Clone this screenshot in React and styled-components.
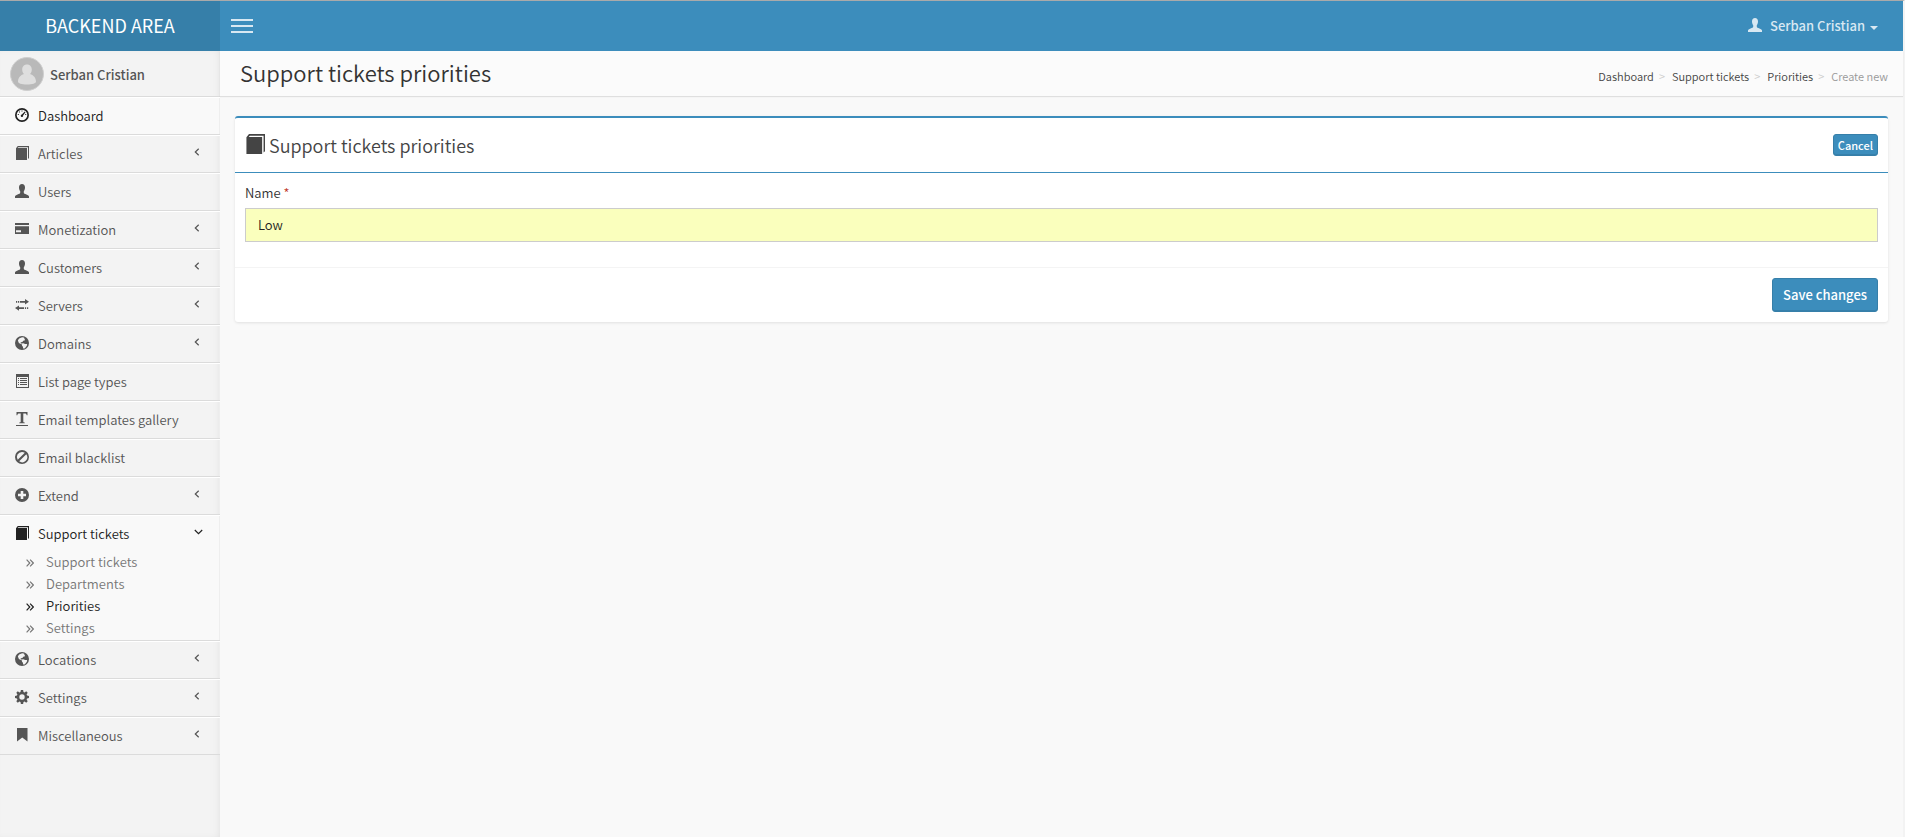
import React from 'react'
import styled, { createGlobalStyle, css } from 'styled-components'

const GlobalStyle = createGlobalStyle`
  * {
    box-sizing: border-box;
  }
  body {
    margin: 0;
    background: #f9f9f9;
    color: #333;
    font-family: 'Noto Sans CJK SC', 'Open Sans', sans-serif;
    font-size: 13px;
    font-weight: 350;
    line-height: 20px;
  }
  a {
    color: inherit;
    text-decoration: none;
  }
  ul, ol {
    list-style: none;
    margin: 0;
    padding: 0;
  }
  button, input {
    font-family: inherit;
  }
`

/* icons, all on a 14 unit grid */

const Svg = styled.svg`
  display: block;
  flex: none;
  width: ${p => p.$size || 14}px;
  height: ${p => p.$size || 14}px;
  fill: currentColor;
`

const shapes = {
  dashboard: <>
    <path fillRule='evenodd' d='M7 0a7 7 0 1 0 0 14A7 7 0 0 0 7 0zm0 1.7a5.3 5.3 0 1 1 0 10.6A5.3 5.3 0 0 1 7 1.7z' />
    <path d='M6.5 2.6h1v1h-1zM4 3.6h1v1H4zM2.8 6h1v1h-1zM10.2 6h1v1h-1zM9.8 3.6l.7.6-2.4 3.3a1.2 1.2 0 1 1-1.3-.9z' />
  </>,
  book: <path d='M1 2.2 2.8 0H14v12l-1 .9V1.2H3.4l-.8.9H12V14H1z' />,
  user: <path d='M7 0c1.9 0 3 1.4 3 3.6 0 1.5-.5 2.8-1.2 3.6v1.5c0 .7 1 1.1 2.6 1.7 1.6.6 2.6 1.1 2.6 2.1V14H0v-1.5c0-1 1-1.5 2.6-2.1 1.6-.6 2.6-1 2.6-1.7V7.200C4.500 6.400 4 5.100 4 3.600 4 1.400 5.100 0 7 0z' />,
  card: <path fillRule='evenodd' d='M0 1h14v2H0zM0 4.200h14V12H0zM1 8.200v2h5v-2z' />,
  transfer: <path d='M10 1l4 2.800-4 2.700V4.700H5V3h5zM3 3h1.200v1.700H3zM1 3h1.200v1.700H1zM4 7.500v1.800h5V11H4v1.800L0 10.100zM9.900 9.300h1.200V11H9.900zM12 9.300h1.200V11H12z' />,
  globe: <path fillRule='evenodd' d='M7 0a7 7 0 1 0 0 14A7 7 0 0 0 7 0zM6.400 1.500 8 1.300l1.600.7-.5 1 .9.200-.4 1.300-1.400.2-.8 1.300-1.500.3-.5.900 1.200.2 1.700-.2 1.900.8 1.700-.1.300 1-1.200 2.200-1.500 1.300-1.300.1-.3-1.700-1-1.200.2-1.200L5 7.700 3.600 6.500 2.900 4.300l1.300-1.700z' />,
  list: <path fillRule='evenodd' d='M1 0h13v14H1zM2 3v10h11V3zM3 4h1v1H3zM5 4h7v1H5zM3 6h1v1H3zM5 6h7v1H5zM3 8h1v1H3zM5 8h7v1H5zM3 10h1v1H3zM5 10h7v1H5z' />,
  textSize: <path d='M1.500 0h11v3.200h-.8C11.500 1.900 11 1.400 9.800 1.400H8.300v8c0 .8.300 1 1.500 1.100v.8H4.200v-.8c1.200-.1 1.500-.3 1.500-1.100v-8H4.200C3 1.400 2.500 1.900 2.300 3.200h-.8zM1 13h12v1H1z' />,
  ban: <path fillRule='evenodd' d='M7 0a7 7 0 1 0 0 14A7 7 0 0 0 7 0zm0 1.900c1 0 2 .3 2.800.8L2.700 9.800A5.100 5.100 0 0 1 7 1.900zm4.300 2.300A5.100 5.100 0 0 1 4.200 11.300z' />,
  plus: <path fillRule='evenodd' d='M7 0a7 7 0 1 0 0 14A7 7 0 0 0 7 0zM5.700 3h2.600v2.700H11v2.600H8.300V11H5.700V8.300H3V5.700h2.700z' />,
  cog: <path fillRule='evenodd' d='M5.900 0h2.200l.4 1.900 1.100.5L11.200 1.300l1.500 1.500-1.100 1.600.5 1.100 1.900.4v2.200l-1.900.4-.5 1.100 1.100 1.600-1.500 1.500-1.600-1.100-1.100.5L8.100 14H5.900l-.4-1.900-1.100-.5-1.600 1.100-1.500-1.500 1.100-1.600-.5-1.100L0 8.100V5.900l1.900-.4.5-1.100L1.300 2.800l1.500-1.500 1.600 1.100 1.100-.5zM7 4.300a2.700 2.700 0 1 0 0 5.400 2.700 2.700 0 0 0 0-5.400z' />,
  bookmark: <path d='M2 0h10.500v13.500L7.250 9.500 2 13.500z' />,
}

const Icon = ({ name, size }) =>
  <Svg viewBox='0 0 14 14' $size={size} aria-hidden='true'>{shapes[name]}</Svg>

const Line = styled.svg`
  display: block;
  flex: none;
  fill: none;
  stroke: currentColor;
  stroke-width: 1.2;
`

const AngleLeft = () =>
  <Line width='6' height='8' viewBox='0 0 6 8'><path d='M4.700.7 1.300 4l3.400 3.300' /></Line>

const AngleDown = () =>
  <Line width='9' height='6' viewBox='0 0 9 6'><path d='M.8 1 4.500 4.600 8.200 1' /></Line>

const DoubleAngle = () =>
  <Line width='8' height='8' viewBox='0 0 8 8'><path d='M.6.700 3.800 4 .6 7.300M4.100.700 7.300 4 4.100 7.300' /></Line>

/* layout */

const Page = styled.div`
  display: flex;
  flex-direction: column;
  min-height: 100vh;
  border-top: 1px solid #aaa;
  border-right: 2px solid #f3f3f3;
`

const Topbar = styled.header`
  display: flex;
  height: 50px;
  background: #3c8dbc;
  color: #fff;
`

const Logo = styled.a`
  flex: none;
  width: 220px;
  background: #367fa9;
  font-size: 18px;
  font-weight: 400;
  line-height: 48px;
  text-align: center;
`

const Navbar = styled.nav`
  flex: 1;
  display: flex;
  align-items: center;
  justify-content: space-between;
  padding: 0 25px 0 11px;
`

const Toggle = styled.button`
  display: flex;
  flex-direction: column;
  gap: 4px;
  width: 22px;
  padding: 0;
  border: 0;
  background: none;
  cursor: pointer;
  span {
    height: 2px;
    background: #d8e8f2;
  }
`

const Account = styled.button`
  display: flex;
  align-items: center;
  padding: 0;
  border: 0;
  background: none;
  color: #d8e8f2;
  font-size: 13px;
  font-weight: 500;
  line-height: 20px;
  cursor: pointer;
  svg {
    margin: 0 8px 2px 0;
  }
`

const Caret = styled.span`
  margin: 4px 0 0 5px;
  border: 4px solid transparent;
  border-top-color: currentColor;
  border-bottom: 0;
`

const Columns = styled.div`
  flex: 1;
  display: flex;
`

const Sidebar = styled.aside`
  flex: none;
  width: 220px;
  background: #f3f3f3;
  color: #555;
  box-shadow: inset -3px 0 8px -4px rgba(0, 0, 0, 0.1);
`

const UserPanel = styled.div`
  display: flex;
  align-items: center;
  height: 46px;
  padding: 0 10px;
  gap: 6px;
  border-bottom: 1px solid #dbdbdb;
  font-weight: 500;
  span {
    padding-top: 3px;
  }
`

const itemOn = css`
  background: #f9f9f9;
  color: #222;
`

const Item = styled.li`
  border-top: 1px solid #fff;
  border-bottom: 1px solid #dbdbdb;
  box-shadow: inset -1px 0 0 #eee;
  ${p => p.$on && itemOn}
`

const ItemLink = styled.a`
  display: flex;
  align-items: center;
  gap: 9px;
  height: 36px;
  padding: 0 16px 2px 15px;
  span {
    flex: 1;
    padding-top: 1px;
  }
`

const Angle = styled.i`
  display: flex;
  width: 10px;
  padding-bottom: 2px;
`

const SubLink = styled.a`
  display: flex;
  align-items: center;
  gap: 12px;
  height: 22px;
  padding-left: 26px;
  color: ${p => p.$on ? '#222' : '#777'};
  span {
    padding-bottom: 2px;
  }
`

const Main = styled.main`
  flex: 1;
  min-width: 0;
`

const Heading = styled.div`
  display: flex;
  align-items: center;
  justify-content: space-between;
  height: 45px;
  padding: 0 15px 4px 20px;
  background: #fbfbfb;
  box-shadow: 0 1px 1px rgba(0, 0, 0, 0.1);
  h1 {
    margin: 0;
    color: #333;
    font-size: 22px;
    font-weight: 350;
    line-height: 40px;
  }
`

const Crumbs = styled.ol`
  display: flex;
  padding-top: 8px;
  color: #999;
  font-size: 11px;
  li + li::before {
    content: '>';
    padding: 0 7px 0 5px;
    color: #ccc;
  }
  a {
    color: #444;
  }
`

const Box = styled.form`
  margin: 20px 15px;
  border-top: 2px solid #3c8dbc;
  border-radius: 3px;
  background: #fff;
  box-shadow: 0 1px 3px rgba(0, 0, 0, 0.1);
`

const BoxHeader = styled.div`
  display: flex;
  align-items: flex-start;
  justify-content: space-between;
  height: 55px;
  padding: 16px 10px 0;
  border-bottom: 1px solid #3c8dbc;
`

const BoxTitle = styled.h3`
  display: flex;
  gap: 4px;
  margin: 0;
  color: #444;
  font-size: 18px;
  font-weight: 350;
  line-height: 22px;
`

const BoxBody = styled.div`
  padding: 10px 10px 25px;
  label {
    display: block;
    margin-bottom: 5px;
  }
  em {
    color: #c0392b;
    font-style: normal;
  }
`

const TextInput = styled.input`
  display: block;
  width: 100%;
  height: 34px;
  padding: 5px 12px 7px;
  border: 1px solid #ccc;
  border-radius: 0;
  background: #faffbd;
  color: #222;
  font-size: 13px;
  font-weight: 350;
  outline: 0;
`

const BoxFooter = styled.div`
  display: flex;
  justify-content: flex-end;
  padding: 10px;
  border-top: 1px solid #f4f4f4;
`

const Button = styled.button`
  height: ${p => p.$small ? 22 : 34}px;
  padding: ${p => p.$small ? '0 4px' : '0 10px'};
  border: 1px solid #367fa9;
  border-radius: 3px;
  background: #3c8dbc;
  box-shadow: inset 0 -1px 0 rgba(0, 0, 0, 0.09);
  color: #fff;
  font-size: ${p => p.$small ? 11 : 13}px;
  font-weight: 500;
  line-height: 20px;
  cursor: pointer;
`

const Avatar = () =>
  <svg width='34' height='34' viewBox='0 0 34 34' aria-hidden='true'>
    <circle cx='17' cy='17' r='16.500' fill='#b9b9b9' stroke='#cfcfcf' />
    <path fill='#dedede' d='M17 7.500c3 0 4.800 2.200 4.800 5 0 2-.8 3.500-1.800 4.500 3.500 1 6 4 6 7.500 0 2-3.500 3-9 3s-9-1-9-3c0-3.500 2.500-6.500 6-7.500-1-1-1.800-2.500-1.800-4.500 0-2.800 1.800-5 4.800-5z' />
  </svg>

const menu = [
  { icon: 'dashboard', text: 'Dashboard', on: true },
  { icon: 'book', text: 'Articles', more: true },
  { icon: 'user', text: 'Users' },
  { icon: 'card', text: 'Monetization', more: true },
  { icon: 'user', text: 'Customers', more: true },
  { icon: 'transfer', text: 'Servers', more: true },
  { icon: 'globe', text: 'Domains', more: true },
  { icon: 'list', text: 'List page types' },
  { icon: 'textSize', text: 'Email templates gallery' },
  { icon: 'ban', text: 'Email blacklist' },
  { icon: 'plus', text: 'Extend', more: true },
  {
    icon: 'book',
    text: 'Support tickets',
    on: true,
    more: true,
    sub: ['Support tickets', 'Departments', 'Priorities', 'Settings'],
  },
  { icon: 'globe', text: 'Locations', more: true },
  { icon: 'cog', text: 'Settings', more: true },
  { icon: 'bookmark', text: 'Miscellaneous', more: true },
]

const MenuItem = ({ icon, text, on, more, sub }) =>
  <Item $on={on}>
    <ItemLink href='#'>
      <Icon name={icon} />
      <span>{text}</span>
      { more && <Angle>{sub ? <AngleDown /> : <AngleLeft />}</Angle> }
    </ItemLink>
    { sub &&
      <ul>
        {sub.map(s =>
          <li key={s}>
            <SubLink href='#' $on={s === 'Priorities'}><DoubleAngle /><span>{s}</span></SubLink>
          </li>
        )}
      </ul>
    }
  </Item>

const App = () =>
  <Page>
    <GlobalStyle />
    <Topbar>
      <Logo href='#'>BACKEND AREA</Logo>
      <Navbar>
        <Toggle type='button' aria-label='Toggle navigation'><span /><span /><span /></Toggle>
        <Account type='button'>
          <Icon name='user' />
          Serban Cristian
          <Caret />
        </Account>
      </Navbar>
    </Topbar>
    <Columns>
      <Sidebar>
        <UserPanel><Avatar /><span>Serban Cristian</span></UserPanel>
        <ul>
          {menu.map(m => <MenuItem key={m.text} {...m} />)}
        </ul>
      </Sidebar>
      <Main>
        <Heading>
          <h1>Support tickets priorities</h1>
          <Crumbs>
            <li><a href='#'>Dashboard</a></li>
            <li><a href='#'>Support tickets</a></li>
            <li><a href='#'>Priorities</a></li>
            <li>Create new</li>
          </Crumbs>
        </Heading>
        <Box onSubmit={e => e.preventDefault()}>
          <BoxHeader>
            <BoxTitle><Icon name='book' size={20} />Support tickets priorities</BoxTitle>
            <Button type='button' $small>Cancel</Button>
          </BoxHeader>
          <BoxBody>
            <label htmlFor='name'>Name <em>*</em></label>
            <TextInput id='name' type='text' defaultValue='Low' />
          </BoxBody>
          <BoxFooter>
            <Button type='submit'>Save changes</Button>
          </BoxFooter>
        </Box>
      </Main>
    </Columns>
  </Page>

export default App
